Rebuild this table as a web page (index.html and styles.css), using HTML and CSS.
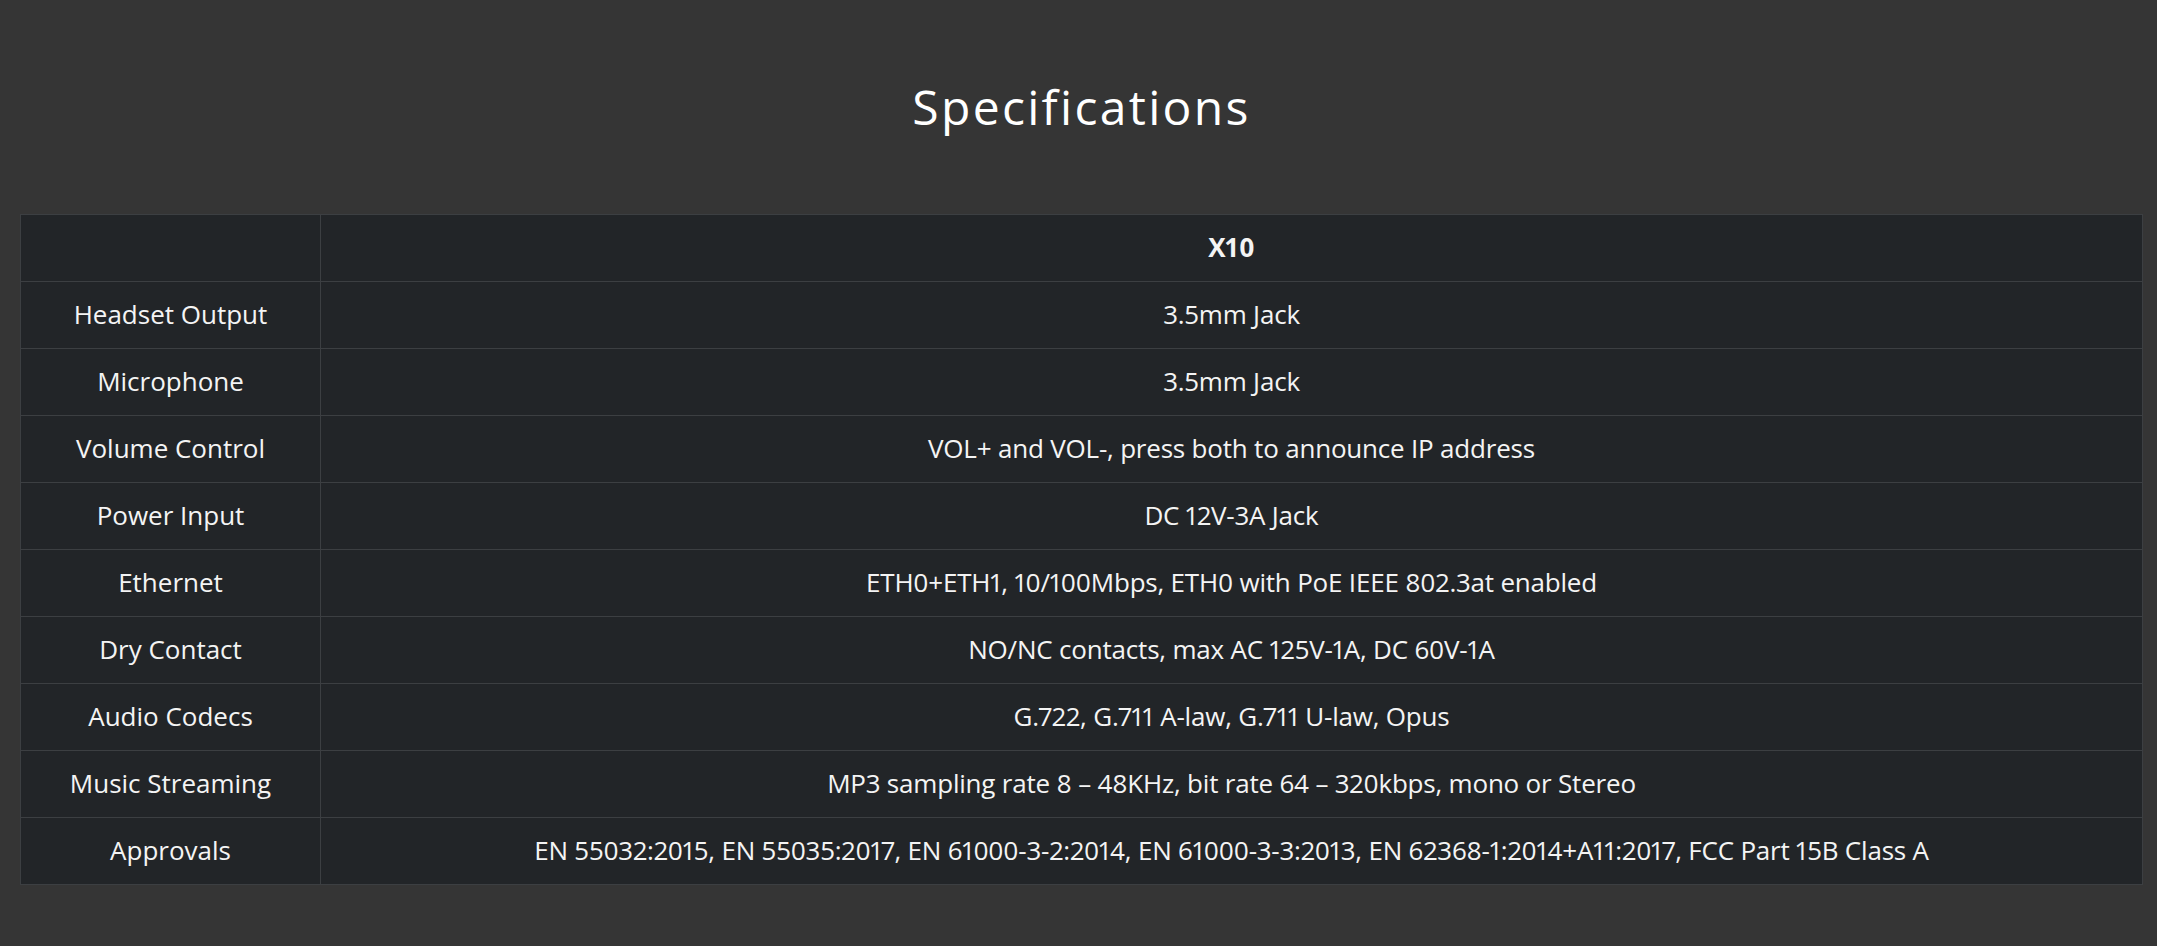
FILE: index.html
```html
<!DOCTYPE html>
<html lang="en">
<head>
<meta charset="utf-8">
<title>Specifications</title>
<link rel="stylesheet" href="styles.css">
</head>
<body>
<section class="specs">
  <h2 class="specs-title">Specifications</h2>
  <table class="specs-table">
    <thead>
      <tr><th class="label"></th><th class="value">X10</th></tr>
    </thead>
    <tbody>
      <tr><td class="label">Headset Output</td><td class="value">3.5mm Jack</td></tr>
      <tr><td class="label">Microphone</td><td class="value">3.5mm Jack</td></tr>
      <tr><td class="label">Volume Control</td><td class="value">VOL+ and VOL-, press both to announce IP address</td></tr>
      <tr><td class="label">Power Input</td><td class="value">DC 12V-3A Jack</td></tr>
      <tr><td class="label">Ethernet</td><td class="value">ETH0+ETH1, 10/100Mbps, ETH0 with PoE IEEE 802.3at enabled</td></tr>
      <tr><td class="label">Dry Contact</td><td class="value">NO/NC contacts, max AC 125V-1A, DC 60V-1A</td></tr>
      <tr><td class="label">Audio Codecs</td><td class="value">G.722, G.711 A-law, G.711 U-law, Opus</td></tr>
      <tr><td class="label">Music Streaming</td><td class="value">MP3 sampling rate 8 – 48KHz, bit rate 64 – 320kbps, mono or Stereo</td></tr>
      <tr><td class="label">Approvals</td><td class="value">EN 55032:2015, EN 55035:2017, EN 61000-3-2:2014, EN 61000-3-3:2013, EN 62368-1:2014+A11:2017, FCC Part 15B Class A</td></tr>
    </tbody>
  </table>
</section>
</body>
</html>
```

FILE: styles.css
```css
html, body {
  margin: 0;
  padding: 0;
  background: #353535;
}

body {
  font-family: "Open Sans", "Liberation Sans", sans-serif;
  color: #f4f4f4;
  min-height: 946px;
}

.specs {
  padding: 78px 14px 0 20px;
}

.specs-title {
  margin: 0 0 78px;
  font-size: 48px;
  line-height: 58px;
  font-weight: 400;
  letter-spacing: 2.3px;
  text-align: center;
  color: #ffffff;
}

.specs-table {
  width: 2123px;
  border-collapse: collapse;
  background: #222528;
  font-size: 26px;
  font-variant-numeric: proportional-nums;
}

.specs-table th,
.specs-table td {
  height: 64px;
  padding: 0 10px 2px;
  border: 1px solid #3c3f42;
  text-align: center;
  vertical-align: middle;
  font-weight: 400;
}

.specs-table .label {
  width: 279px;
}

.specs-table td.value {
  letter-spacing: -0.2px;
}

.specs-table th.value {
  font-weight: 700;
}
```
